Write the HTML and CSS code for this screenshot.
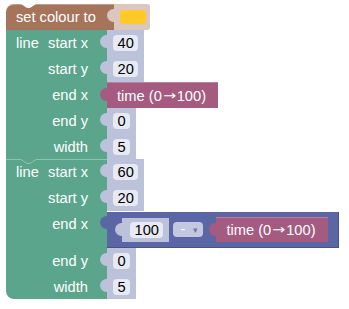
FILE: index.html
```html
<!DOCTYPE html>
<html lang="en">
  <head>
    <meta charset="UTF-8" />
    <title>Blocks</title>
    <link rel="stylesheet" href="styles.css">
  </head>
  <body>
    <div class="stack">
      <div class="row hat">
        <div class="cell brown">set colour to</div>
        <div class="value colour-slot"><span class="swatch"></span></div>
      </div>

      <div class="line-block">
        <div class="row">
          <div class="cell first"><span>line</span><span>start x</span></div>
          <div class="value shadow"><span class="field">40</span></div>
        </div>
        <div class="row">
          <div class="cell">start y</div>
          <div class="value shadow"><span class="field">20</span></div>
        </div>
        <div class="row">
          <div class="cell">end x</div>
          <div class="value reporter">time (0<span class="to">→</span>100)</div>
        </div>
        <div class="row">
          <div class="cell">end y</div>
          <div class="value shadow"><span class="field">0</span></div>
        </div>
        <div class="row last">
          <div class="cell">width</div>
          <div class="value shadow"><span class="field">5</span></div>
        </div>
      </div>

      <div class="line-block second">
        <svg class="seam" width="101" height="6" viewBox="0 0 101 6">
          <path d="M0 0.5 H15 l6 4 h3 l6 -4 H101" fill="none" stroke="#8cc2b0" stroke-width="1" />
        </svg>
        <div class="row">
          <div class="cell first"><span>line</span><span>start x</span></div>
          <div class="value shadow"><span class="field">60</span></div>
        </div>
        <div class="row">
          <div class="cell">start y</div>
          <div class="value shadow"><span class="field">20</span></div>
        </div>
        <div class="row tall">
          <div class="cell">end x</div>
          <div class="value op">
            <div class="value shadow inner"><span class="field">100</span></div>
            <span class="dropdown"><span class="minus">-</span><span class="arrow">▾</span></span>
            <div class="value reporter inner-rep">time (0<span class="to">→</span>100)</div>
          </div>
        </div>
        <div class="row">
          <div class="cell">end y</div>
          <div class="value shadow"><span class="field">0</span></div>
        </div>
        <div class="row last">
          <div class="cell bottom">width</div>
          <div class="value shadow"><span class="field">5</span></div>
        </div>
      </div>
    </div>
  </body>
</html>
```

FILE: styles.css
```css
body {
  margin: 0;
  background: #fff;
  font-family: "Liberation Sans", Arial, sans-serif;
  font-size: 11pt;
}

.stack {
  padding: 4px 0 0 6px;
}

.row {
  display: flex;
  align-items: stretch;
  height: 26px;
}

.row.last {
  height: 25px;
}

.row.tall {
  height: 37px;
}

.cell {
  width: 101px;
  box-sizing: border-box;
  display: flex;
  justify-content: flex-end;
  align-items: flex-start;
  padding: 0 19px 0 10px;
  line-height: 26px;
  color: #fff;
  background: #5ba58c;
  white-space: nowrap;
}

.cell.first {
  justify-content: space-between;
}

.cell.bottom {
  border-bottom-left-radius: 8px;
}

/* set colour block */
.hat {
  position: relative;
}

.hat::before {
  content: "";
  position: absolute;
  top: 0;
  left: 15px;
  width: 15px;
  height: 4px;
  background: #fff;
  clip-path: polygon(0 0, 100% 0, 60% 100%, 40% 100%);
}

.hat::after {
  content: "";
  position: absolute;
  bottom: -4px;
  left: 15px;
  width: 15px;
  height: 4px;
  background: #a5745b;
  clip-path: polygon(0 0, 100% 0, 60% 100%, 40% 100%);
}

.cell.brown {
  width: 108px;
  justify-content: flex-start;
  background: #a5745b;
  border-top-left-radius: 8px;
  border-top: 1px solid #c09d8c;
  line-height: 24px;
}

.colour-slot {
  background: #dbc7bd;
  padding: 0 4px 0 6px;
  border-radius: 0 3px 3px 0;
}

.swatch {
  width: 26px;
  height: 14px;
  border-radius: 3px;
  background: #ffca28;
  margin-top: -1px;
}

/* value inputs */
.value {
  position: relative;
  display: flex;
  align-items: center;
  box-sizing: border-box;
}

.value::before {
  content: "";
  position: absolute;
  left: -7px;
  top: 5px;
  width: 7px;
  height: 13px;
  border-radius: 7px 0 0 7px;
  background: inherit;
}

.shadow {
  background: #bdc2db;
  padding: 0 6px;
}

.field {
  height: 16px;
  line-height: 16px;
  padding: 0 4.5px;
  border-radius: 4px;
  background: #e8eaf3;
  color: #000;
}

.reporter {
  background: #a55b80;
  color: #fff;
  padding: 0 12px 0 10px;
  border-top: 1px solid #bd7f9e;
  line-height: 24px;
  white-space: nowrap;
}

.to {
  font-family: "DejaVu Sans", sans-serif;
  font-size: 13px;
  display: inline-block;
  transform: scaleX(1.2);
  margin: 0 2px;
}

/* line blocks */
.line-block {
  position: relative;
}

.line-block.second::after {
  content: "";
  position: absolute;
  bottom: -4px;
  left: 15px;
  width: 15px;
  height: 4px;
  background: #5ba58c;
  clip-path: polygon(0 0, 100% 0, 60% 100%, 40% 100%);
}

.seam {
  position: absolute;
  top: 0;
  left: 0;
  display: block;
}

/* arithmetic block */
.op {
  background: #5b67a5;
  height: 36px;
  margin-top: 1px;
  padding: 0 10px 0 15px;
  border-right: 1px solid #48528a;
  border-bottom: 1px solid #48528a;
}

.op::before {
  top: 4px;
}

.shadow.inner {
  height: 24px;
  padding: 0 6px 0 8px;
}

.dropdown {
  display: flex;
  align-items: center;
  justify-content: space-between;
  width: 30px;
  height: 15px;
  box-sizing: border-box;
  margin-left: 4px;
  padding: 0 5px 0 7px;
  border-radius: 4px;
  background: #c3c7e0;
}

.minus {
  color: #fff;
  line-height: 15px;
}

.arrow {
  color: #6e78ae;
  font-size: 9px;
}

.reporter.inner-rep {
  margin-left: 13px;
  height: 25px;
}
```
